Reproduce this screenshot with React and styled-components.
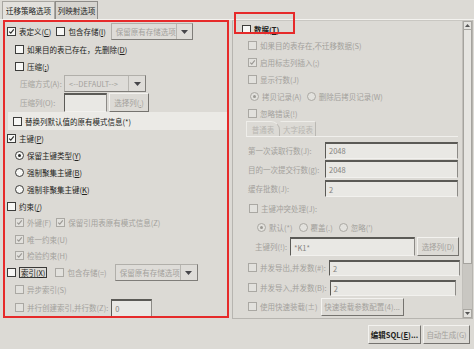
import React from "react";
import styled, { createGlobalStyle } from "styled-components";

const FONT = `"Noto Sans CJK SC", "Noto Sans", "DejaVu Sans", sans-serif`;
const BG = "#dcdad5";
const TEXT = "#222220";
const DIS = "#a3a19c";
const RED = "#e62a2a";

const Global = createGlobalStyle`
  html, body { margin: 0; padding: 0; background: ${BG}; }
  * { box-sizing: border-box; }
`;

const Page = styled.div`
  position: relative;
  width: 474px;
  height: 349px;
  overflow: hidden;
  background: ${BG};
  font-family: ${FONT};
  font-size: 7.5px;
  color: ${TEXT};
  display: grid;
  grid-template-rows: 20px 300px 29px;
`;

const TabStrip = styled.div`
  display: flex;
  align-items: flex-end;
  padding-left: 2px;
  border-bottom: 1px solid #f3f2ef;
`;

const Tab = styled.div`
  height: 18px;
  width: ${(p) => p.$w}px;
  display: flex;
  align-items: center;
  justify-content: center;
  border: 1px solid ${(p) => (p.$active ? "#a8a6a1" : "#8e8c88")};
  border-bottom: none;
  background: ${(p) => (p.$active ? "#e3e1dd" : "#d6d4cf")};
  color: ${TEXT};
  white-space: nowrap;
`;

const Main = styled.div`
  display: flex;
  align-items: flex-start;
  padding-left: 3px;
  gap: 3px;
`;

const LeftPanel = styled.div`
  width: 226px;
  height: 298px;
  border: 2px solid ${RED};
  display: flex;
  flex-direction: column;
  overflow: hidden;
`;

const Row = styled.div`
  display: flex;
  align-items: center;
  height: ${(p) => p.$h || 17}px;
  padding-left: ${(p) => p.$in || 0}px;
  gap: ${(p) => p.$gap ?? 6}px;
  flex: none;
  white-space: nowrap;
  background: ${(p) => (p.$hl ? "#ebeae6" : "transparent")};
  margin-left: ${(p) => p.$ml || 0}px;
`;

const ItemLabel = styled.span`
  display: inline-flex;
  align-items: center;
  gap: 3px;
  color: ${(p) => (p.$disabled ? DIS : TEXT)};
  font-weight: ${(p) => (p.$bold ? 700 : 400)};
  white-space: nowrap;
`;

const Focus = styled.span`
  border: 1px solid #3a3a38;
  padding: 0 1px;
  line-height: 9px;
`;

const Box = styled.span`
  width: 9px;
  height: 9px;
  flex: none;
  border: 1px solid ${(p) => (p.$disabled ? "#aaa8a3" : "#3c3c3a")};
  background: ${(p) => (p.$disabled ? "#e2e1dd" : "#f7f7f5")};
  display: inline-flex;
  align-items: center;
  justify-content: center;
`;

const Round = styled(Box)`
  border-radius: 50%;
`;

const Dot = styled.span`
  width: 3px;
  height: 3px;
  border-radius: 50%;
  background: ${(p) => (p.$disabled ? "#9a9893" : "#2a2a28")};
`;

function Check({ checked, disabled, bold, focus, children }) {
  const c = disabled ? "#9a9893" : "#2a2a28";
  return (
    <ItemLabel $disabled={disabled} $bold={bold}>
      <Box $disabled={disabled}>
        {checked && (
          <svg width="7" height="7" viewBox="0 0 7 7">
            <path d="M1.2 3.6 L2.8 5.2 L5.8 1.4" fill="none" stroke={c} strokeWidth="1.1" />
          </svg>
        )}
      </Box>
      {focus ? <Focus>{children}</Focus> : <span>{children}</span>}
    </ItemLabel>
  );
}

function Radio({ checked, disabled, children }) {
  return (
    <ItemLabel $disabled={disabled}>
      <Round $disabled={disabled}>{checked && <Dot $disabled={disabled} />}</Round>
      <span>{children}</span>
    </ItemLabel>
  );
}

const Plain = styled.span`
  color: ${(p) => (p.$disabled ? DIS : TEXT)};
  width: ${(p) => (p.$w ? `${p.$w}px` : "auto")};
  flex: none;
`;

const Combo = styled.div`
  display: flex;
  width: ${(p) => p.$w}px;
  height: 17px;
  border: 1px solid #b1afaa;
  border-right-color: #7f7d79;
  border-bottom-color: #7f7d79;
  background: #dedcd8;
  color: ${DIS};
  flex: none;
`;

const ComboText = styled.span`
  flex: 1;
  display: flex;
  align-items: center;
  padding-left: 4px;
`;

const ComboArrow = styled.span`
  width: 17px;
  border-left: 1px solid #b8b6b1;
  display: flex;
  align-items: center;
  justify-content: center;
`;

function Select({ w, children }) {
  return (
    <Combo $w={w}>
      <ComboText>{children}</ComboText>
      <ComboArrow>
        <svg width="7" height="4" viewBox="0 0 7 4">
          <path d="M0 0 H7 L3.5 4 Z" fill="#46464a" />
        </svg>
      </ComboArrow>
    </Combo>
  );
}

const Field = styled.div`
  width: ${(p) => p.$w}px;
  height: ${(p) => p.$h || 17}px;
  flex: none;
  border-top: 2px solid #5b5a56;
  border-left: 1px solid #5b5a56;
  border-right: 1px solid #8c8a86;
  border-bottom: 1px solid #f2f1ee;
  background: #e9e8e4;
  color: #85837f;
  padding-left: 3px;
  display: flex;
  align-items: center;
`;

const Btn = styled.div`
  height: ${(p) => p.$h || 19}px;
  width: ${(p) => p.$w}px;
  margin-left: ${(p) => p.$ml || 0}px;
  flex: none;
  border: 1px solid;
  border-color: #f3f2ef #75736f #75736f #f3f2ef;
  background: ${BG};
  color: ${(p) => (p.$disabled ? DIS : TEXT)};
  font-weight: ${(p) => (p.$bold ? 700 : 400)};
  display: flex;
  align-items: center;
  justify-content: center;
  white-space: nowrap;
  padding: 0;
`;

const RightPanel = styled.div`
  width: 241px;
  height: 299px;
  border: 1px solid #b7b5b0;
  border-top-color: #c9c7c2;
  display: flex;
`;

const RightContent = styled.div`
  flex: 1;
  display: flex;
  flex-direction: column;
  overflow: hidden;
`;

const SubTabs = styled.div`
  display: flex;
  align-items: flex-end;
  height: 16px;
  margin: 0 4px 4px 13px;
  border-bottom: 1px solid #f0efec;
  flex: none;
`;

const SubTab = styled.div`
  height: 15px;
  width: ${(p) => p.$w}px;
  display: flex;
  align-items: center;
  justify-content: center;
  color: #b8b6b1;
  border-top: 1px solid #eeede9;
  border-left: 1px solid ${(p) => (p.$active ? "#eeede9" : "transparent")};
  border-right: 1px solid #bab8b3;
  border-top-right-radius: ${(p) => (p.$active ? 9 : 2)}px;
  background: transparent;
`;

const Scrollbar = styled.div`
  width: 10px;
  display: flex;
  flex-direction: column;
  border-left: 1px solid #c1bfba;
  background: #c9c7c2;
`;

const ScrollArrow = styled.div`
  height: 9px;
  background: #e4e3df;
  border: 1px solid #a9a7a2;
  display: flex;
  align-items: center;
  justify-content: center;
  flex: none;
`;

const Thumb = styled.div`
  height: 234px;
  background: #e6e5e1;
  border: 1px solid #a5a39e;
  border-top: none;
  flex: none;
`;

const Trough = styled.div`
  flex: 1;
`;

const Bottom = styled.div`
  display: flex;
  justify-content: flex-end;
  align-items: center;
  gap: 2px;
  padding-right: 4px;
`;

const Annotation = styled.div`
  position: absolute;
  left: 234px;
  top: 12px;
  width: 61px;
  height: 22px;
  border: 2px solid ${RED};
  pointer-events: none;
`;

export default function App() {
  return (
    <>
      <Global />
      <Page>
        <TabStrip>
          <Tab $w={53} $active>迁移策略选项</Tab>
          <Tab $w={43}>列映射选项</Tab>
        </TabStrip>

        <Main>
          <LeftPanel>
            <Row $h={19} $in={2} $gap={5}>
              <Check checked>表定义(<u>C</u>)</Check>
              <Check>包含存储(<u>I</u>)</Check>
              <Select w={82}>保留原有存储选项</Select>
            </Row>
            <Row $in={10}>
              <Check>如果目的表已存在，先删除(<u>D</u>)</Check>
            </Row>
            <Row $in={10}>
              <Check>压缩(<u>;</u>)</Check>
            </Row>
            <Row $in={15} $gap={2}>
              <Plain $disabled $w={42}>压缩方式(A):</Plain>
              <Select w={82}>&lt;--DEFAULT--&gt;</Select>
            </Row>
            <Row $h={20} $in={15} $gap={2}>
              <Plain $disabled $w={42}>压缩列(O):</Plain>
              <Field $w={43} $h={19} />
              <Btn $w={40} $disabled>选择列(<u>.</u>)</Btn>
            </Row>
            <Row $h={18} $in={5} $ml={3} $hl>
              <Check>替换列默认值的原有模式信息(*)</Check>
            </Row>
            <Row $in={2}>
              <Check checked>主键(<u>P</u>)</Check>
            </Row>
            <Row $in={10}>
              <Radio checked>保留主键类型(<u>Y</u>)</Radio>
            </Row>
            <Row $in={10}>
              <Radio>强制聚集主键(<u>B</u>)</Radio>
            </Row>
            <Row $in={10}>
              <Radio>强制非聚集主键(<u>K</u>)</Radio>
            </Row>
            <Row $h={16} $in={2}>
              <Check>约束(<u>/</u>)</Check>
            </Row>
            <Row $in={10} $gap={5}>
              <Check checked disabled>外键(F)</Check>
              <Check checked disabled>保留引用表原有模式信息(Z)</Check>
            </Row>
            <Row $h={16} $in={10}>
              <Check checked disabled>唯一约束(U)</Check>
            </Row>
            <Row $in={10}>
              <Check checked disabled>检验约束(H)</Check>
            </Row>
            <Row $in={2} $gap={8}>
              <Check focus>索引(<u>X</u>)</Check>
              <Check disabled>包含存储(=)</Check>
              <Select w={83}>保留原有存储选项</Select>
            </Row>
            <Row $in={10}>
              <Check disabled>异步索引(S)</Check>
            </Row>
            <Row $h={19} $in={10} $gap={3}>
              <Check disabled>并行创建索引,并行数(Z):</Check>
              <Field $w={41} $h={18}>0</Field>
            </Row>
          </LeftPanel>

          <RightPanel>
            <RightContent>
              <Row $h={16} $in={9}>
                <Check bold>数据(<u>T</u>)</Check>
              </Row>
              <Row $in={15}>
                <Check disabled>如果目的表存在,不迁移数据(S)</Check>
              </Row>
              <Row $in={15}>
                <Check disabled checked>启用标志列插入(;)</Check>
              </Row>
              <Row $in={15}>
                <Check disabled>显示行数(J)</Check>
              </Row>
              <Row $in={17} $gap={5}>
                <Radio disabled checked>拷贝记录(A)</Radio>
                <Radio disabled>删除后拷贝记录(W)</Radio>
              </Row>
              <Row $h={16} $in={15}>
                <Check disabled>忽略错误(!)</Check>
              </Row>
              <SubTabs>
                <SubTab $w={34} $active>普通表</SubTab>
                <SubTab $w={36}>大字段表</SubTab>
              </SubTabs>
              <Row $h={18} $in={15} $gap={0}>
                <Plain $disabled $w={77}>第一次读取行数(J):</Plain>
                <Field $w={133} $h={17}>2048</Field>
              </Row>
              <Row $h={20} $in={15} $gap={0}>
                <Plain $disabled $w={77}>目的一次提交行数(g):</Plain>
                <Field $w={133} $h={18}>2048</Field>
              </Row>
              <Row $h={19} $in={15} $gap={0}>
                <Plain $disabled $w={77}>缓存批数(J):</Plain>
                <Field $w={133} $h={17}>2</Field>
              </Row>
              <Row $h={20} $in={16}>
                <Check disabled>主键冲突处理(J):</Check>
              </Row>
              <Row $h={18} $in={24} $gap={6}>
                <Radio disabled checked>默认(*)</Radio>
                <Radio disabled>覆盖(.)</Radio>
                <Radio disabled>忽略(')</Radio>
              </Row>
              <Row $h={21} $in={22} $gap={0}>
                <Plain $disabled $w={35}>主键列(!):</Plain>
                <Field $w={125} $h={19}>*K1*</Field>
                <Btn $w={42} $h={19} $ml={2} $disabled>选择列(D)</Btn>
              </Row>
              <Row $h={21} $in={15} $gap={3}>
                <Check disabled>并发导出,并发数(#):</Check>
                <Field $w={131} $h={16}>2</Field>
              </Row>
              <Row $h={19} $in={15} $gap={3}>
                <Check disabled>并发导入,并发数(B):</Check>
                <Field $w={126} $h={16}>2</Field>
              </Row>
              <Row $h={19} $in={15} $gap={3}>
                <Check disabled>使用快速装载(±)</Check>
                <Btn $w={83} $h={18} $disabled>快速装载参数配置(4)...</Btn>
              </Row>
            </RightContent>
            <Scrollbar>
              <ScrollArrow>
                <svg width="5" height="3" viewBox="0 0 5 3">
                  <path d="M0 3 H5 L2.5 0 Z" fill="#555" />
                </svg>
              </ScrollArrow>
              <Thumb />
              <Trough />
              <ScrollArrow>
                <svg width="5" height="3" viewBox="0 0 5 3">
                  <path d="M0 0 H5 L2.5 3 Z" fill="#555" />
                </svg>
              </ScrollArrow>
            </Scrollbar>
          </RightPanel>
        </Main>

        <Bottom>
          <Btn $w={53} $h={19} $bold>编辑SQL(<u>E</u>)...</Btn>
          <Btn $w={47} $h={19} $disabled>自动生成(G)</Btn>
        </Bottom>

        <Annotation />
      </Page>
    </>
  );
}
